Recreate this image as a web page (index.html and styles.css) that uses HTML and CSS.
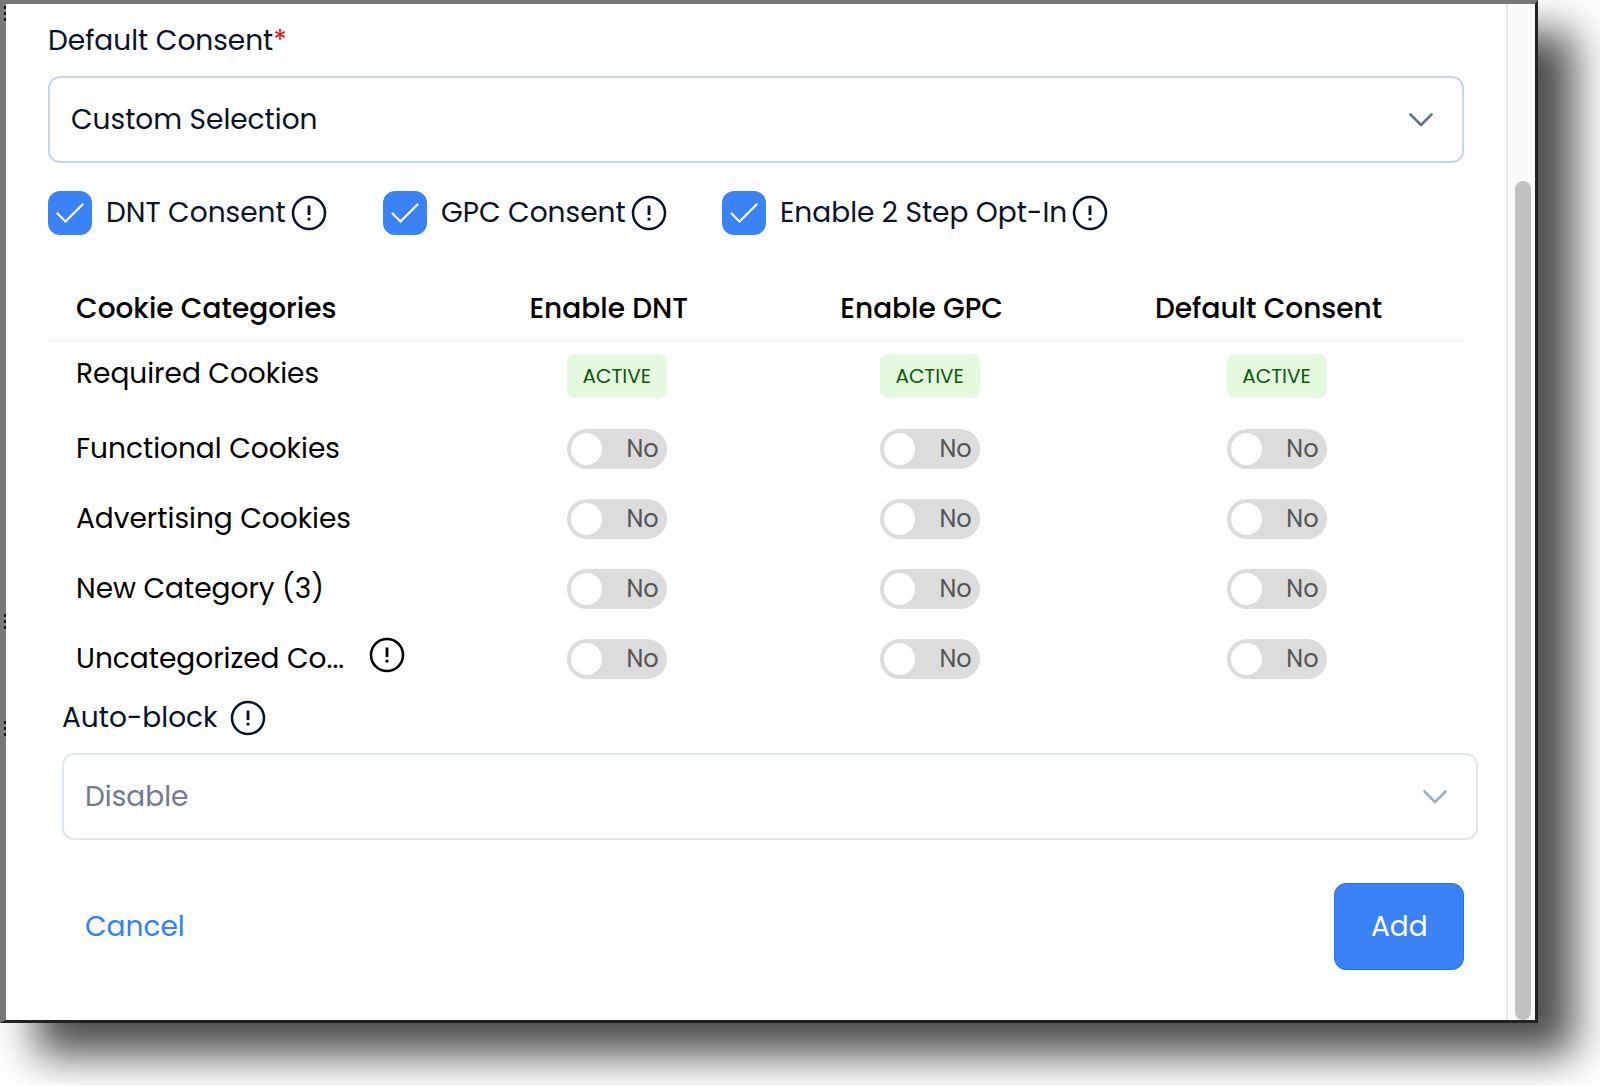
FILE: index.html
```html
<!DOCTYPE html>
<html lang="en">
<head>
  <meta charset="UTF-8">
  <meta name="viewport" content="width=device-width, initial-scale=1.0">
  <title>Default Consent</title>
  <link rel="stylesheet" href="styles.css">
</head>
<body>
  <!-- shared icons -->
  <svg class="sprite" aria-hidden="true">
    <symbol id="icon-info" viewBox="0 0 36 36">
      <circle cx="18" cy="18" r="16" fill="none" stroke="currentColor" stroke-width="2.5"/>
      <path d="M18 10.500v9.500M18 22.800v2.700" fill="none" stroke="currentColor" stroke-width="2.8"/>
    </symbol>
    <symbol id="icon-down" viewBox="0 0 28 28">
      <path d="M3.5 8.5L14 19L24.500 8.500" fill="none" stroke="currentColor" stroke-width="2.6" stroke-linecap="round" stroke-linejoin="round"/>
    </symbol>
    <symbol id="icon-check" viewBox="0 0 44 44">
      <path d="M9.500 22.500L17.500 30.500L34.500 13.500" fill="none" stroke="currentColor" stroke-width="2.2" stroke-linecap="round"/>
    </symbol>
  </svg>

  <div class="backdrop">
    <div class="modal">
      <form class="modal-body" onsubmit="return false">

        <label class="label" for="consent">Default Consent<span class="required">*</span></label>
        <div class="select-box">
          <select id="consent">
            <option>Custom Selection</option>
          </select>
          <svg class="chevron"><use href="#icon-down"/></svg>
        </div>

        <div class="checks">
          <div class="check">
            <span class="tick">
              <input type="checkbox" id="dnt" checked>
              <svg><use href="#icon-check"/></svg>
            </span>
            <label for="dnt">DNT Consent</label>
            <svg class="info"><use href="#icon-info"/></svg>
          </div>
          <div class="check">
            <span class="tick">
              <input type="checkbox" id="gpc" checked>
              <svg><use href="#icon-check"/></svg>
            </span>
            <label for="gpc">GPC Consent</label>
            <svg class="info"><use href="#icon-info"/></svg>
          </div>
          <div class="check">
            <span class="tick">
              <input type="checkbox" id="optin" checked>
              <svg><use href="#icon-check"/></svg>
            </span>
            <label for="optin">Enable 2 Step Opt-In</label>
            <svg class="info"><use href="#icon-info"/></svg>
          </div>
        </div>

        <table class="categories">
          <thead>
            <tr>
              <th>Cookie Categories</th>
              <th>Enable DNT</th>
              <th>Enable GPC</th>
              <th>Default Consent</th>
            </tr>
          </thead>
          <tbody>
            <tr class="required-row">
              <td>Required Cookies</td>
              <td><span class="badge">ACTIVE</span></td>
              <td><span class="badge">ACTIVE</span></td>
              <td><span class="badge">ACTIVE</span></td>
            </tr>
            <tr>
              <td>Functional Cookies</td>
              <td><label class="switch"><input type="checkbox"><span>No</span></label></td>
              <td><label class="switch"><input type="checkbox"><span>No</span></label></td>
              <td><label class="switch"><input type="checkbox"><span>No</span></label></td>
            </tr>
            <tr>
              <td>Advertising Cookies</td>
              <td><label class="switch"><input type="checkbox"><span>No</span></label></td>
              <td><label class="switch"><input type="checkbox"><span>No</span></label></td>
              <td><label class="switch"><input type="checkbox"><span>No</span></label></td>
            </tr>
            <tr>
              <td>New Category (3)</td>
              <td><label class="switch"><input type="checkbox"><span>No</span></label></td>
              <td><label class="switch"><input type="checkbox"><span>No</span></label></td>
              <td><label class="switch"><input type="checkbox"><span>No</span></label></td>
            </tr>
            <tr>
              <td>
                <div class="name">
                  <span>Uncategorized Co...</span>
                  <svg class="info"><use href="#icon-info"/></svg>
                </div>
              </td>
              <td><label class="switch"><input type="checkbox"><span>No</span></label></td>
              <td><label class="switch"><input type="checkbox"><span>No</span></label></td>
              <td><label class="switch"><input type="checkbox"><span>No</span></label></td>
            </tr>
          </tbody>
        </table>

        <div class="autoblock">
          <div class="autoblock-label">
            <label for="autoblock">Auto-block</label>
            <svg class="info"><use href="#icon-info"/></svg>
          </div>
          <div class="select-box disabled">
            <select id="autoblock" disabled>
              <option>Disable</option>
            </select>
            <svg class="chevron"><use href="#icon-down"/></svg>
          </div>
        </div>

        <div class="actions">
          <button type="button" class="btn-cancel">Cancel</button>
          <button type="submit" class="btn-add">Add</button>
        </div>
      </form>

      <div class="scrollbar"><div class="thumb"></div></div>
    </div>

    <!-- menu handles of the page behind the modal -->
    <span class="dots dots-1"></span>
    <span class="dots dots-2"></span>
    <span class="dots dots-3"></span>
  </div>
</body>
</html>
```

FILE: styles.css
```css
* {
  box-sizing: border-box;
}

body {
  margin: 0;
  padding: 0 62px 62px 0;
  background-color: #fff;
  font-family: Poppins, Inter, sans-serif;
  font-size: 28px;
  line-height: 44px;
  color: #0b1329;
}

button, select {
  font: inherit;
}

svg {
  display: block;
  flex: none;
}

.sprite {
  position: absolute;
  width: 0;
  height: 0;
}

.backdrop {
  position: relative;
  border-style: solid;
  border-width: 4px 3px 3px 6px;
  border-color: #777 #222 #222 #777;
  box-shadow: 36px 32px 40px rgba(0, 0, 0, 0.7);
}

.modal {
  display: flex;
  background-color: #fefefe;
}

.modal-body {
  flex: 1;
  padding: 15px 42px 50px;
}

.label {
  display: block;
  margin-bottom: 13px;
}

.required {
  color: #e11;
}

/* selects */
.select-box {
  position: relative;
}

.select-box select {
  display: block;
  width: 100%;
  height: 87px;
  padding: 0 70px 0 21px;
  border: 2px solid #cbd5e4;
  border-radius: 12px;
  background-color: #fefefe;
  color: #0b1329;
  appearance: none;
}

.chevron {
  position: absolute;
  top: 30px;
  right: 29px;
  width: 28px;
  height: 28px;
  color: #64748b;
  pointer-events: none;
}

.disabled select {
  border-color: #e0e6ef;
  color: #747b89;
  opacity: 1;
}

.disabled .chevron {
  color: #a1abb9;
}

.info {
  width: 36px;
  height: 36px;
}

/* checkboxes */
.checks {
  display: grid;
  grid-template-columns: 335px 339px 1fr;
  margin: 28px 0 51px;
}

.check {
  display: flex;
  align-items: center;
}

.check label {
  margin: 0 5px 0 14px;
}

.tick {
  position: relative;
  width: 44px;
  height: 44px;
}

.tick input {
  display: block;
  width: 44px;
  height: 44px;
  margin: 0;
  border-radius: 12px;
  appearance: none;
  border: 2px solid #cbd5e4;
}

.tick input:checked {
  border: none;
  background-color: #3b82f6;
}

.tick svg {
  position: absolute;
  top: 0;
  left: 0;
  width: 44px;
  height: 44px;
  color: #fff;
  pointer-events: none;
}

/* categories table */
.categories {
  width: 100%;
  table-layout: fixed;
  border-collapse: collapse;
  color: #000;
}

.categories th {
  width: 22.8%;
  height: 55px;
  padding: 0 0 9px;
  border-bottom: 2px solid #f8f8f9;
  font-weight: 500;
  text-align: center;
}

.categories th:first-child {
  width: 28.2%;
  text-align: left;
}

.categories th:nth-child(3) {
  width: 21.4%;
}

.categories th:last-child {
  width: 27.6%;
}

.categories td {
  height: 70px;
  padding: 0 0 0 16px;
  text-align: center;
}

.categories th:first-child,
.categories td:first-child {
  padding-left: 28px;
  text-align: left;
}

.categories .required-row td {
  height: 73px;
  padding-top: 12px;
  vertical-align: top;
}

.categories .required-row td:first-child {
  padding-top: 10px;
}

.name {
  display: flex;
  align-items: flex-start;
  gap: 25px;
}

.badge {
  display: block;
  width: 100px;
  margin: 0 auto;
  border-radius: 8px;
  background-color: #e4f9e0;
  color: #0a5c0a;
  font-size: 20px;
}

.switch {
  position: relative;
  display: block;
  width: 100px;
  height: 40px;
  margin: 0 auto;
}

.switch input {
  display: block;
  width: 100px;
  height: 40px;
  margin: 0;
  border-radius: 20px;
  background-color: #dcdcdc;
  appearance: none;
}

.switch input::before {
  content: "";
  position: absolute;
  top: 4px;
  left: 4px;
  width: 31px;
  height: 32px;
  border-radius: 50%;
  background-color: #fff;
}

.switch span {
  position: absolute;
  top: 0;
  right: 8px;
  color: #555;
  font-size: 24px;
  line-height: 40px;
}

/* auto-block */
.autoblock {
  margin: 2px -14px 43px 14px;
}

.autoblock-label {
  display: flex;
  align-items: center;
  gap: 12px;
  margin-bottom: 13px;
}

.actions {
  display: flex;
  justify-content: space-between;
}

.actions button {
  height: 87px;
  padding: 0 36px;
  border: 1px solid transparent;
  border-radius: 12px;
  background: none;
  cursor: pointer;
}

.actions .btn-cancel {
  color: #3080ff;
}

.actions .btn-add {
  width: 130px;
  border-color: #1a73f0;
  background-color: #3b82f6;
  color: #fff;
}

/* scrollbar */
.scrollbar {
  display: flex;
  width: 29px;
  padding: 177px 4px 0 7px;
  border-left: 2px solid #e8e8e8;
  background-color: #fafafa;
}

.thumb {
  flex: 1;
  border-radius: 8px;
  background-color: #c1c1c1;
}

.dots {
  position: absolute;
  left: -2px;
  width: 2px;
  height: 16px;
  background: repeating-linear-gradient(#111 0 3px, #888 3px 6px);
}

.dots-1 {
  top: 2px;
}

.dots-2 {
  top: 610px;
}

.dots-3 {
  top: 717px;
}
```
